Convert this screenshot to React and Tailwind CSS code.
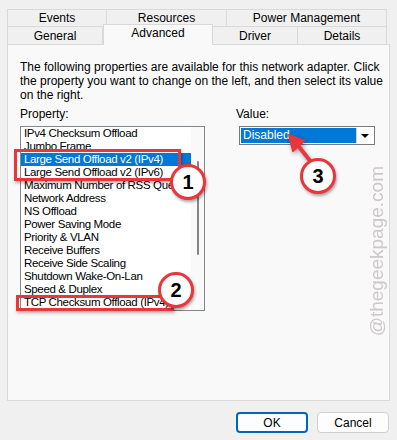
import React from 'react'

const items = [
  'IPv4 Checksum Offload',
  'Jumbo Frame',
  'Large Send Offload v2 (IPv4)',
  'Large Send Offload v2 (IPv6)',
  'Maximum Number of RSS Queues',
  'Network Address',
  'NS Offload',
  'Power Saving Mode',
  'Priority & VLAN',
  'Receive Buffers',
  'Receive Side Scaling',
  'Shutdown Wake-On-Lan',
  'Speed & Duplex',
  'TCP Checksum Offload (IPv4)',
]

function Tab({ label, w, active }) {
  if (active) {
    return (
      <div
        className={`${w} h-[21px] -mt-[2px] relative z-10 bg-[#f9f9f9] border border-b-0 border-[#d9d9d9] flex items-start justify-center pt-[1px]`}
      >
        {label}
      </div>
    )
  }
  return (
    <div className={`${w} h-full bg-[#f0f0f0] border border-[#d9d9d9] -ml-px first:ml-0 flex items-center justify-center`}>
      {label}
    </div>
  )
}

function Badge({ n, className }) {
  return (
    <div
      className={`absolute w-[36px] h-[36px] rounded-full bg-white border-[3px] border-[#e8363c] shadow-[1px_2px_3px_rgba(0,0,0,0.35)] flex items-center justify-center text-[20px] font-bold text-black ${className}`}
    >
      {n}
    </div>
  )
}

export default function App() {
  return (
    <div className="relative w-[397px] h-[440px] overflow-hidden bg-[#f0f0f0] text-black text-[12px] leading-[14px] font-['Liberation_Sans',Arial,sans-serif]">
      {/* tabs */}
      <div className="pt-[9px] px-[7px]">
        <div className="flex h-[18px]">
          <Tab label="Events" w="w-[100px]" />
          <Tab label="Resources" w="w-[121px]" />
          <Tab label="Power Management" w="w-[161px]" />
        </div>
        <div className="flex h-[19px] -mt-px">
          <Tab label="General" w="w-[96px]" />
          <Tab label="Advanced" w="w-[110px]" active />
          <Tab label="Driver" w="w-[86px]" />
          <Tab label="Details" w="w-[90px]" />
        </div>
      </div>

      {/* panel */}
      <div className="mx-[7px] -mt-px h-[357px] bg-[#f9f9f9] border border-[#d9d9d9] pt-[15px] pl-[12px]">
        <p className="whitespace-nowrap">
          The following properties are available for this network adapter. Click
          <br />
          the property you want to change on the left, and then select its value
          <br />
          on the right.
        </p>
        <div className="flex mt-[5px]">
          <div>
            <div className="mb-[5px]">Property:</div>
            <div className="w-[185px] h-[185px] bg-white border border-[#828790] flex">
              <div className="flex-1 text-[11.5px] tracking-[-0.35px]">
                {items.map((t, i) => (
                  <div
                    key={t}
                    className={`h-[13px] leading-[13px] pl-[3px] whitespace-nowrap overflow-hidden ${
                      i === 2 ? 'bg-[#0078d7] text-white' : ''
                    }`}
                  >
                    {t}
                  </div>
                ))}
              </div>
              <div className="w-[16px] bg-[#f9f9f9] flex justify-center pt-[34px]">
                <div className="w-[2px] h-[94px] bg-[#858585] rounded-full" />
              </div>
            </div>
          </div>
          <div className="ml-[31px]">
            <div className="mb-[5px]">Value:</div>
            <div className="ml-[3px] w-[136px] h-[19px] bg-white border border-[#7a7a7a] flex p-[1px]">
              <div className="flex-1 bg-[#0078d7] text-white pl-[2px] leading-[15px]">Disabled</div>
              <div className="w-[17px] flex items-center justify-center border-l border-[#d0d0d0] bg-white">
                <div className="w-0 h-0 border-l-[4px] border-r-[4px] border-t-[4px] border-l-transparent border-r-transparent border-t-black" />
              </div>
            </div>
          </div>
        </div>
      </div>

      {/* buttons */}
      <div className="flex justify-end gap-[9px] pr-[8px] mt-[11px]">
        <button className="w-[72px] h-[21px] rounded-[4px] bg-[#fdfdfd] border-2 border-[#0067c0] text-[12px] leading-[14px]">
          OK
        </button>
        <button className="w-[72px] h-[21px] rounded-[4px] bg-[#fdfdfd] border border-[#d0d0d0] text-[12px] leading-[14px]">
          Cancel
        </button>
      </div>

      {/* annotations */}
      <div className="absolute left-[14px] top-[149px] w-[167px] h-[32px] border-[3px] border-[#e8363c] shadow-[1px_2px_3px_rgba(0,0,0,0.3)]" />
      <div className="absolute left-[16px] top-[295px] w-[158px] h-[16px] border-[3px] border-[#e8363c] shadow-[1px_2px_3px_rgba(0,0,0,0.3)]" />
      <svg className="absolute left-0 top-0 pointer-events-none" width="397" height="440">
        <g style={{ filter: 'drop-shadow(1px 2px 2px rgba(0,0,0,0.35))' }}>
          <line x1="311" y1="162" x2="296" y2="143" stroke="#e8363c" strokeWidth="4" strokeLinecap="round" />
          <polygon points="289,135 304,141 293,151" fill="#e8363c" stroke="#e8363c" strokeWidth="2" strokeLinejoin="round" />
        </g>
      </svg>
      <Badge n="1" className="left-[170px] top-[164px]" />
      <Badge n="2" className="left-[158px] top-[272px]" />
      <Badge n="3" className="left-[300px] top-[158px]" />

      {/* watermark */}
      <div className="absolute left-[367px] top-[166px] [writing-mode:vertical-rl] rotate-180 text-[19px] leading-[20px] text-[#cdc8ca] whitespace-nowrap">
        @thegeekpage.com
      </div>
    </div>
  )
}
